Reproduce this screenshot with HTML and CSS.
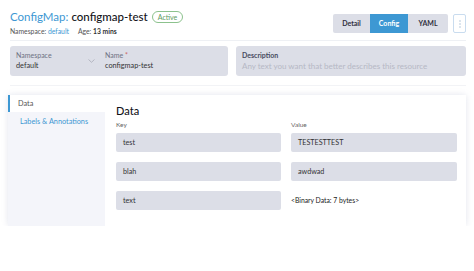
FILE: index.html
```html
<!DOCTYPE html>
<html>
<head>
<meta charset="utf-8">
<link rel="stylesheet" href="styles.css">
</head>
<body>
<div class="page">
  <header class="masthead">
    <div class="title-block">
      <h1 class="title"><span class="kind">ConfigMap:</span><span class="name">configmap-test</span><span class="badge">Active</span></h1>
      <div class="meta"><span>Namespace: <a class="link">default</a></span><span>Age: <b>13 mins</b></span></div>
    </div>
    <div class="actions">
      <div class="btn-group">
        <span class="btn">Detail</span>
        <span class="btn active">Config</span>
        <span class="btn">YAML</span>
      </div>
      <span class="kebab"><svg width="2" height="8" viewBox="0 0 2 8"><circle cx="1" cy="1" r="0.7" fill="#9fb8cf"/><circle cx="1" cy="4" r="0.7" fill="#9fb8cf"/><circle cx="1" cy="7" r="0.7" fill="#9fb8cf"/></svg></span>
    </div>
  </header>
  <div class="form-row">
    <div class="field double">
      <div class="sub ns">
        <div class="label">Namespace</div>
        <div class="value">default</div>
        <svg class="chev" width="7" height="4" viewBox="0 0 7 4"><path d="M0.5 0.5 L3.5 3.3 L6.5 0.5" fill="none" stroke="#a9acb8" stroke-width="0.8"/></svg>
      </div>
      <div class="sub">
        <div class="label">Name <span class="req">*</span></div>
        <div class="value">configmap-test</div>
      </div>
    </div>
    <div class="field">
      <div class="label dark">Description</div>
      <div class="value placeholder">Any text you want that better describes this resource</div>
    </div>
  </div>
  <div class="tabs">
    <nav class="tab-nav">
      <div class="tab active">Data</div>
      <div class="tab link">Labels &amp; Annotations</div>
    </nav>
    <section class="tab-body">
      <h2>Data</h2>
      <div class="grid">
        <div class="col-label">Key</div>
        <div class="col-label">Value</div>
        <div class="input">test</div>
        <div class="input">TESTESTTEST</div>
        <div class="input">blah</div>
        <div class="input">awdwad</div>
        <div class="input">text</div>
        <div class="binary">&lt;Binary Data: 7 bytes&gt;</div>
      </div>
    </section>
  </div>
</div>
</body>
</html>
```
FILE: styles.css
```css
* { box-sizing: border-box; }
html, body { margin: 0; padding: 0; background: #fff; }
body { font-family: Lato, "Liberation Sans", sans-serif; color: #141419; }
.page { padding: 9px 8px 0 10px; width: 474px; }
.masthead { display: flex; justify-content: space-between; align-items: flex-start; height: 32px; border-bottom: 1px solid #eef0f4; }
.title { margin: 0; font-size: 11.5px; font-weight: 400; line-height: 16px; display: flex; align-items: center; height: 16px; white-space: nowrap; }
.kind { color: #3d98d3; margin-right: 3px; }
.name { font-weight: 500; }
.badge { font-size: 7px; color: #5d9a5e; border: 1px solid #8cc28d; border-radius: 7px; padding: 0 5px; line-height: 10px; height: 12px; margin-left: 4px; }
.meta { font-size: 6.8px; color: #555; margin-top: 2px; display: flex; gap: 9px; line-height: 8px; }
.meta b { font-weight: 700; color: #333; }
.link { color: #3d98d3; }
.actions { display: flex; gap: 5px; margin-top: 5px; }
.btn-group { display: flex; }
.btn { height: 19px; line-height: 19px; background: #dcdee7; font-size: 7px; font-weight: 700; color: #303040; text-align: center; }
.btn:nth-child(1) { width: 37px; border-radius: 2px 0 0 2px; }
.btn:nth-child(2) { width: 38px; }
.btn:nth-child(3) { width: 40px; border-radius: 0 2px 2px 0; }
.btn.active { background: #3d98d3; color: #fff; }
.kebab { width: 13px; height: 19px; border: 1px solid #c9dcef; border-radius: 2px; display: flex; align-items: center; justify-content: center; background: #fff; }
.form-row { display: flex; gap: 8px; padding: 5px 0 0; height: 45px; border-bottom: 1px solid #f2f3f6; }
.field { flex: 1; background: #dcdee7; border-radius: 3px; height: 30px; padding: 5px 6px 0; }
.field.double { display: flex; padding: 0; }
.sub { flex: 1; position: relative; padding: 5px 6px 0; }
.sub.ns { flex: 0 0 89px; }
.label { font-size: 7px; color: #6e7183; line-height: 9px; }
.label.dark { color: #484b5e; font-weight: 700; }
.req { color: #c66; }
.value { font-size: 7.3px; color: #333; line-height: 12px; }
.value.placeholder { color: #b6b8c5; font-size: 8px; }
.chev { position: absolute; right: 4px; top: 13px; }
.tabs { display: flex; margin: 9px 0 0 -2px; width: 458px; height: 131px; box-shadow: 0 0 6px rgba(190, 195, 215, 0.45); border-radius: 2px; }
.tab-nav { width: 97px; background: #f4f5fa; padding-top: 0; }
.tab { font-size: 7.3px; height: 17px; line-height: 17px; padding-left: 10px; }
.tab.active { background: #fff; border-left: 2px solid #3d98d3; padding-left: 8px; color: #555; }
.tab.link { margin-top: 1px; padding-left: 12px; }
.tab-body { flex: 1; background: #fff; padding: 8px 9px 0 11px; }
h2 { margin: 0; font-size: 11px; font-weight: 500; line-height: 16px; color: #141419; }
.grid { display: grid; grid-template-columns: 165px 166px; column-gap: 10px; row-gap: 10px; margin-top: 1px; }
.col-label { font-size: 6.5px; color: #666; line-height: 9px; margin-bottom: -6px; }
.input { height: 19px; line-height: 19px; background: #dcdee7; border-radius: 2px; font-size: 7.2px; color: #333; padding-left: 7px; }
.binary { font-size: 6.8px; line-height: 19px; color: #222; }
```
